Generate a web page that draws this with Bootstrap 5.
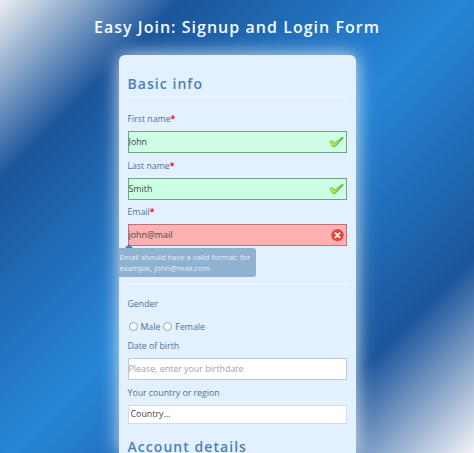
<!DOCTYPE html>
<html lang="en">
<head>
    <meta charset="UTF-8">
    <meta name="viewport" content="width=device-width, initial-scale=1.0">
    <title>Easy Join: Signup and Login Form</title>
    <link href="https://cdn.jsdelivr.net/npm/bootstrap@5.3.0/dist/css/bootstrap.min.css" rel="stylesheet">
    <style>
        body {
            height: 453px;
            overflow: hidden;
            background: linear-gradient(135deg, #eceef2 0%, #1b559b 19.5%, #2786d7 50%, #1b559b 79%, #f2f3f6 100%);
            font-family: "Open Sans", "Noto Sans", sans-serif;
            font-size: 8.75px;
            font-weight: 500;
            line-height: 12px;
            color: #4c6f96;
        }
        .page-title {
            font-size: 16px;
            line-height: 22px;
            font-weight: 650;
            letter-spacing: 1.03px;
            color: #f4faff;
            padding-top: 16px;
            margin-bottom: 17px;
        }
        .signup-box {
            width: 237px;
            height: 398px;
            padding: 19px 9px 0;
            background: #e3f1fe;
            border-radius: 6px 6px 0 0;
            box-shadow: 0 0 18px 1px rgba(255, 255, 255, 0.75);
        }
        .section-title {
            font-size: 14px;
            line-height: 20px;
            font-weight: 600;
            letter-spacing: 1.05px;
            color: #4b80b4;
        }
        .divider {
            height: 1px;
            background: #f1f8fe;
        }
        .form-label {
            display: block;
            height: 12px;
        }
        .req {
            color: #e0202e;
            font-weight: 700;
        }
        .signup-box .form-control,
        .signup-box .form-select {
            height: 22px;
            padding: 0 1px 0 0;
            border-radius: 0;
            font-size: 8.85px;
            font-weight: 500;
            line-height: 20px;
            color: #444;
            background-image: none;
            border: 1px solid #c3c8cd;
        }
        .signup-box .form-control::placeholder {
            color: #a3a3a3;
        }
        .signup-box .form-select {
            height: 19px;
            padding: 0 2px;
            line-height: 17px;
            border-color: #d5dbe1;
        }
        .signup-box .field-ok {
            background-color: #ccffe3;
            border-color: #6aa583;
        }
        .signup-box .field-bad {
            background-color: #ffb1b1;
            border-color: #c0707f;
        }
        .state-icon {
            right: 3px;
            top: 4px;
        }
        .hint {
            left: -9px;
            top: 24px;
            width: 137px;
            height: 29px;
            padding: 4px 0 0 1px;
            font-size: 7.7px;
            line-height: 11px;
            color: #e2effa;
            background: #90b2d1;
            border-radius: 0 3px 3px 0;
            white-space: nowrap;
        }
        .hint::before {
            content: "";
            position: absolute;
            left: 6px;
            top: -4px;
            border: solid transparent;
            border-width: 0 4px 4px;
            border-bottom-color: #4f7dad;
        }
        .signup-box .form-check-input {
            width: 9px;
            height: 9px;
            margin: -2px 3px 0 1px;
            float: none;
            border: 1px solid #9fa4aa;
            background: #fff;
        }
    </style>
</head>
<body>
    <h1 class="page-title text-center">Easy Join: Signup and Login Form</h1>
    <form class="signup-box mx-auto">
        <h2 class="section-title mb-0">Basic info</h2>
        <div class="divider" style="margin: 3px 0 15px"></div>

        <label class="form-label" style="margin-bottom: 6px">First name<span class="req">*</span></label>
        <div class="position-relative" style="margin-bottom: 7px">
            <input type="text" class="form-control field-ok" value="John">
            <svg class="state-icon position-absolute" width="15" height="14" viewBox="0 0 15 14">
                <path d="M.6 6.6Q1.8 4.6 3.6 5.4L5.5 7.6 13.6 1.8Q15 2 14.4 3.2L7.4 10.8Q5.4 13 3.4 11.8Z" fill="#6fae5a"/>
                <path d="M1.2 6.4Q2.2 5.2 3.3 5.8L5.2 8.6 11.6 3.7 6.3 10.2Q4.8 11.8 3.6 11Z" fill="#b0ee35"/>
            </svg>
        </div>

        <label class="form-label" style="margin-bottom: 6px">Last name<span class="req">*</span></label>
        <div class="position-relative" style="margin-bottom: 6px">
            <input type="text" class="form-control field-ok" value="Smith">
            <svg class="state-icon position-absolute" width="15" height="14" viewBox="0 0 15 14">
                <path d="M.6 6.6Q1.8 4.6 3.6 5.4L5.5 7.6 13.6 1.8Q15 2 14.4 3.2L7.4 10.8Q5.4 13 3.4 11.8Z" fill="#6fae5a"/>
                <path d="M1.2 6.4Q2.2 5.2 3.3 5.8L5.2 8.6 11.6 3.7 6.3 10.2Q4.8 11.8 3.6 11Z" fill="#b0ee35"/>
            </svg>
        </div>

        <label class="form-label" style="margin-bottom: 6px">Email<span class="req">*</span></label>
        <div class="position-relative" style="margin-bottom: 37px">
            <input type="text" class="form-control field-bad" value="john@mail">
            <svg class="state-icon position-absolute" width="13" height="14" viewBox="0 0 13 14">
                <circle cx="6.5" cy="7.2" r="6.2" fill="#dc4b3e"/>
                <path d="M4.4 5.1 8.6 9.3M8.6 5.1 4.4 9.3" stroke="#fff" stroke-width="1.7" stroke-linecap="round"/>
            </svg>
            <div class="hint position-absolute">Email should have a valid format: for<br>example, john@mail.com</div>
        </div>

        <div class="divider" style="margin-bottom: 14px"></div>

        <label class="form-label" style="margin-bottom: 11px">Gender</label>
        <div class="d-flex align-items-center" style="margin-bottom: 7px">
            <input class="form-check-input" type="radio" name="gender" id="male">
            <label for="male" style="margin-right: 2px">Male</label>
            <input class="form-check-input" type="radio" name="gender" id="female">
            <label for="female">Female</label>
        </div>

        <label class="form-label" style="margin-bottom: 6px">Date of birth</label>
        <input type="text" class="form-control" placeholder="Please, enter your birthdate" style="margin-bottom: 7px">

        <label class="form-label" style="margin-bottom: 6px">Your country or region</label>
        <select class="form-select" style="margin-bottom: 13px">
            <option>Country...</option>
        </select>

        <h2 class="section-title mb-0">Account details</h2>
    </form>
    <script src="https://cdn.jsdelivr.net/npm/bootstrap@5.3.0/dist/js/bootstrap.bundle.min.js"></script>
</body>
</html>
